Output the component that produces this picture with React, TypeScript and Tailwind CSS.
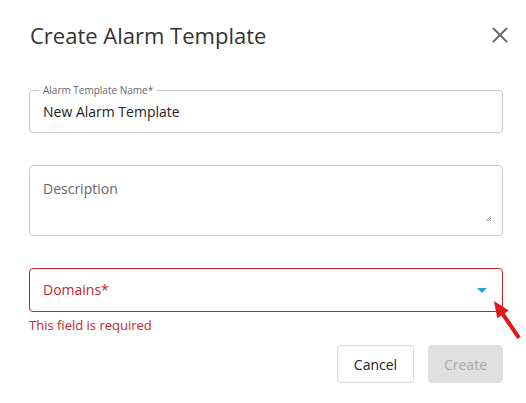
import { X } from "lucide-react";

const fieldBox = "rounded-[4px] border border-[#c9c9c9] bg-white";

const App = () => {
  return (
    <div className="relative h-[403px] w-[526px] overflow-hidden bg-white font-['Open_Sans',sans-serif]">
      <div className="flex flex-col pl-[29px] pr-[23px] pt-5">
        {/* Header */}
        <div className="flex h-[30px] items-center justify-between">
          <h2 className="pl-px text-[22px] leading-[30px] text-[#333]">Create Alarm Template</h2>
          <button className="-mr-[10px] flex items-center justify-center text-[#6b6b6b]">
            <X className="h-[26px] w-[26px]" strokeWidth={1.8} />
          </button>
        </div>

        {/* Name */}
        <div className={`relative mt-10 flex h-[43px] items-center px-[13px] ${fieldBox}`}>
          <span className="absolute -top-[8px] left-[9px] bg-white px-1 text-[10px] leading-[14px] text-[#666]">
            Alarm Template Name*
          </span>
          <span className="text-[14px] leading-5 text-[#222]">New Alarm Template</span>
        </div>

        {/* Description */}
        <div className={`relative mt-8 h-[71px] px-[13px] pt-[10px] ${fieldBox}`}>
          <span className="text-[14px] leading-5 text-[#666]">Description</span>
          <svg className="absolute bottom-[13px] right-[10px]" width="7" height="7" viewBox="0 0 7 7">
            <path d="M6 1L1 6M6 3L3 6M6 5L5 6" stroke="#9a9a9a" strokeWidth="1" />
          </svg>
        </div>

        {/* Domains */}
        <div className="mt-8 flex h-[44px] items-center justify-between rounded-[4px] border border-[#c4262e] pl-[13px] pr-[15px]">
          <span className="text-[14px] leading-5 text-[#c4262e]">Domains*</span>
          <svg width="10" height="5" viewBox="0 0 10 5">
            <path d="M0 0H10L5 5Z" fill="#1ea7d8" />
          </svg>
        </div>
        <p className="mt-[4px] text-[13px] leading-[18px] text-[#c4262e]">This field is required</p>

        {/* Actions */}
        <div className="mt-[11px] flex justify-end gap-[14px]">
          <button className="h-[38px] w-[77px] rounded-[4px] border border-[#d9d9d9] bg-white text-[14px] text-[#222]">
            Cancel
          </button>
          <button className="h-[38px] w-[75px] rounded-[4px] bg-[#e0e0e0] text-[14px] text-[#a9a9a9]">
            Create
          </button>
        </div>
      </div>

      {/* annotation arrow */}
      <svg className="pointer-events-none absolute left-0 top-0" width="526" height="403" viewBox="0 0 526 403">
        <polygon
          points="494,301 508.8,310.4 504.7,313.2 520.7,336.9 517.3,339.1 501.3,315.4 497.2,318.2"
          fill="#e3151a"
        />
      </svg>
    </div>
  );
};

export default App;
